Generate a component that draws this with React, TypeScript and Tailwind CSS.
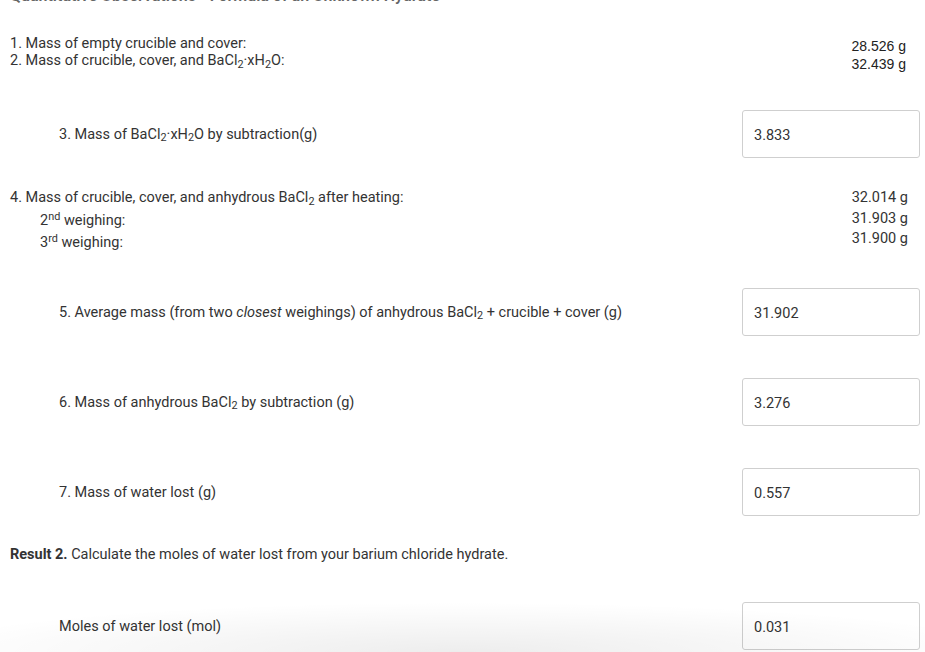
export default function App() {
  const label = "text-[14.5px] text-[#333] [font-family:Roboto,sans-serif]";

  function AnswerRow({ text, value, className }: { text: React.ReactNode; value: string; className: string }) {
    return (
      <div className={`flex items-center justify-between h-[48px] ${className}`}>
        <div className={`pl-[49px] pt-[1px] ${label}`}>{text}</div>
        <div className="w-[178px] h-[48px] border border-[#cfcfcf] rounded-[3px] flex items-center pl-[11px] pt-[3px] text-[14.5px] text-[#333] [font-family:Roboto,sans-serif] bg-white">
          {value}
        </div>
      </div>
    );
  }

  return (
    <div className="relative w-[925px] h-[652px] overflow-hidden bg-white pl-[10px] pr-[5px]">
      {/* heading cut off by the top edge */}
      <div className="h-[10px] overflow-hidden">
        <div className="-mt-[13px] text-[16px] leading-[18px] font-semibold text-[#666] [font-family:Roboto,sans-serif] whitespace-nowrap">
          Quantitative Observations - Formula of an Unknown Hydrate
        </div>
      </div>

      <div className="mt-[25px] flex justify-between h-[40px]">
        <div className={`${label} leading-[17px]`}>
          <div>1. Mass of empty crucible and cover:</div>
          <div>
            2. Mass of crucible, cover, and BaCl<sub>2</sub>·xH<sub>2</sub>O:
          </div>
        </div>
        <div className="pt-[2px] pr-[14px] text-right text-[14px] leading-[18px] text-[#222] [font-family:'Liberation_Sans',Arial,sans-serif]">
          <div>28.526 g</div>
          <div>32.439 g</div>
        </div>
      </div>

      <AnswerRow
        className="mt-[35px]"
        text={
          <>
            3. Mass of BaCl<sub>2</sub>·xH<sub>2</sub>O by subtraction(g)
          </>
        }
        value="3.833"
      />

      <div className="mt-[30px] flex justify-between h-[64px]">
        <div className={label}>
          <div className="leading-[20px]">
            4. Mass of crucible, cover, and anhydrous BaCl<sub>2</sub> after heating:
          </div>
          <div className="pl-[30px] pt-[2px] leading-[22px]">
            2<sup>nd</sup> weighing:
          </div>
          <div className="pl-[30px] leading-[21px]">
            3<sup>rd</sup> weighing:
          </div>
        </div>
        <div className={`pr-[12px] text-right leading-[20.5px] ${label}`}>
          <div>32.014 g</div>
          <div>31.903 g</div>
          <div>31.900 g</div>
        </div>
      </div>

      <AnswerRow
        className="mt-[36px]"
        text={
          <>
            5. Average mass (from two <i>closest</i> weighings) of anhydrous BaCl<sub>2</sub> + crucible + cover (g)
          </>
        }
        value="31.902"
      />

      <AnswerRow
        className="mt-[42px]"
        text={
          <>
            6. Mass of anhydrous BaCl<sub>2</sub> by subtraction (g)
          </>
        }
        value="3.276"
      />

      <AnswerRow className="mt-[42px]" text="7. Mass of water lost (g)" value="0.557" />

      <div className={`mt-[29px] leading-[20px] ${label}`}>
        <b>Result 2.</b> Calculate the moles of water lost from your barium chloride hydrate.
      </div>

      <AnswerRow className="mt-[37px]" text="Moles of water lost (mol)" value="0.031" />

      {/* soft shadow at the bottom edge */}
      <div className="pointer-events-none absolute left-0 right-0 bottom-0 h-[50px] bg-[radial-gradient(ellipse_60%_100%_at_50%_100%,rgba(0,0,0,0.07),transparent)]" />
    </div>
  );
}
